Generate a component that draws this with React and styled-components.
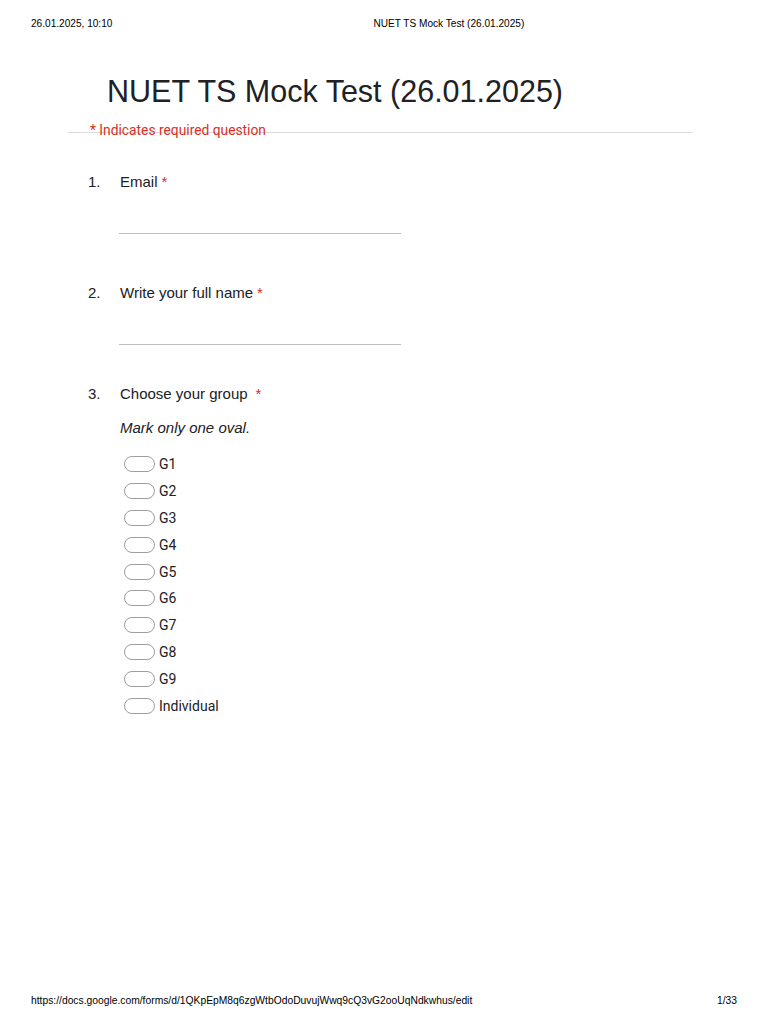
import React from "react";
import styled, { createGlobalStyle } from "styled-components";

const GlobalStyle = createGlobalStyle`
    html, body {
        margin: 0;
        padding: 0;
        background: #ffffff;
    }
`;

const groups = ["G1", "G2", "G3", "G4", "G5", "G6", "G7", "G8", "G9", "Individual"];

function Question({ number, title, gapStar, spacing, children }) {
    return (
        <QuestionBlock $spacing={spacing}>
            <QuestionTitle>
                <QuestionNumber>{number}.</QuestionNumber>
                <span>
                    {title}
                    <Star $gap={gapStar}>*</Star>
                </span>
            </QuestionTitle>
            {children}
        </QuestionBlock>
    );
}

function App() {
    return (
        <Page>
            <GlobalStyle />
            <PrintHeader>
                <span>26.01.2025, 10:10</span>
                <HeaderTitle>NUET TS Mock Test (26.01.2025)</HeaderTitle>
            </PrintHeader>

            <Form>
                <FormTitle>NUET TS Mock Test (26.01.2025)</FormTitle>
                <RequiredNote>* Indicates required question</RequiredNote>

                <Question number={1} title="Email" spacing={40}>
                    <AnswerLine />
                </Question>

                <Question number={2} title="Write your full name" spacing={50}>
                    <AnswerLine />
                </Question>

                <Question number={3} title="Choose your group" gapStar spacing={40}>
                    <Hint>Mark only one oval.</Hint>
                    <Options>
                        {groups.map((group) => (
                            <Option key={group}>
                                <Oval />
                                <OptionLabel>{group}</OptionLabel>
                            </Option>
                        ))}
                    </Options>
                </Question>
            </Form>

            <PrintFooter>
                <span>
                    https://docs.google.com/forms/d/1QKpEpM8q6zgWtbOdoDuvujWwq9cQ3vG2ooUqNdkwhus/edit
                </span>
                <span>1/33</span>
            </PrintFooter>
        </Page>
    );
}

export default App;

const Page = styled.div`
    width: 768px;
    height: 1024px;
    display: flex;
    flex-direction: column;
    font-family: "Liberation Sans", Arial, sans-serif;
    color: #202124;
    box-sizing: border-box;
`;

const PrintHeader = styled.header`
    display: flex;
    padding: 18px 31px 0;
    font-size: 10.1px;
    line-height: 12px;
    color: #000;
`;

const HeaderTitle = styled.span`
    margin-left: 261px;
`;

const PrintFooter = styled.footer`
    margin-top: auto;
    display: flex;
    justify-content: space-between;
    padding: 0 31px 17px;
    font-size: 10.3px;
    line-height: 12px;
    color: #000;
`;

const Form = styled.main`
    display: flex;
    flex-direction: column;
    padding: 0 75px 0 68px;
`;

const FormTitle = styled.h1`
    margin: 43px 0 0 39px;
    font-size: 30.5px;
    font-weight: 400;
    line-height: 36px;
    color: #202124;
`;

const RequiredNote = styled.div`
    margin-top: 13px;
    padding-left: 22px;
    font-family: Roboto, sans-serif;
    font-size: 13.8px;
    line-height: 16px;
    color: #d93025;
    border-bottom: 1px solid #dadce0;
    height: 10px;
    overflow: visible;
`;

const QuestionBlock = styled.section`
    display: flex;
    flex-direction: column;
    margin-top: ${(props) => props.$spacing}px;
    padding-left: 20px;
`;

const QuestionTitle = styled.div`
    display: flex;
    font-size: 15px;
    line-height: 18px;
    color: #202124;
`;

const QuestionNumber = styled.span`
    width: 32px;
`;

const Star = styled.span`
    color: #d93025;
    margin-left: ${(props) => (props.$gap ? "8px" : "4px")};
`;

const AnswerLine = styled.div`
    margin: 42px 0 0 31px;
    width: 282px;
    border-bottom: 1px solid #bdbdbd;
`;

const Hint = styled.div`
    margin: 16px 0 0 32px;
    font-style: italic;
    font-size: 15px;
    line-height: 18px;
`;

const Options = styled.ul`
    list-style: none;
    margin: 18px 0 0 36px;
    padding: 0;
    display: flex;
    flex-direction: column;
    gap: 8.9px;
`;

const Option = styled.li`
    display: flex;
    align-items: center;
    gap: 4px;
    height: 18px;
`;

const Oval = styled.span`
    width: 29px;
    height: 14px;
    border: 1px solid #9e9e9e;
    border-radius: 8px;
`;

const OptionLabel = styled.span`
    font-family: Roboto, sans-serif;
    font-size: 14px;
    color: #202124;
`;
